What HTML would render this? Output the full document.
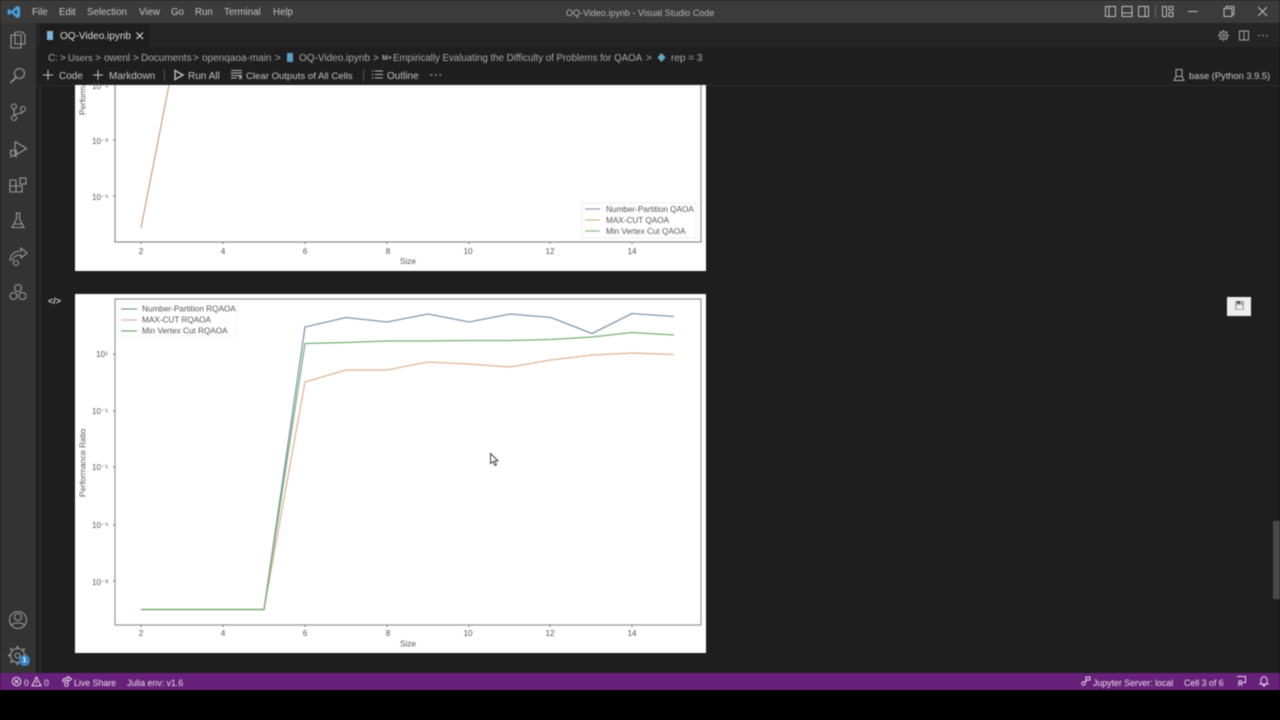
<!DOCTYPE html>
<html><head><meta charset="utf-8"><title>OQ-Video.ipynb - Visual Studio Code</title>
<style>
html,body{margin:0;padding:0;background:#000;width:1280px;height:720px;overflow:hidden}
#w{position:relative;width:1280px;height:720px;overflow:hidden;filter:blur(.5px);font-family:"Liberation Sans",sans-serif;color:#c4c4c4;font-size:10px}
.r{position:absolute}
.t{position:absolute;white-space:nowrap;line-height:14px}
svg{position:absolute;overflow:visible}
.i{fill:none;stroke:#9a9a9a;stroke-width:1.1}
.c{stroke:#bdbdbd;fill:none;stroke-width:1}
.g{color:#a9a9a9}
.m{font-size:9.7px;top:6px}
.b{top:52px}
.k{top:70px}
.sb{color:#e6dcea;font-size:8.800px;top:675.500px}
</style></head><body><div id="w">
<div class="r" style="left:0;top:0;width:1280px;height:23px;background:#3b3b3b"></div>
<div class="r" style="left:0;top:23px;width:36px;height:650px;background:#333"></div>
<div class="r" style="left:36px;top:23px;width:1244px;height:650px;background:#1e1e1e"></div>
<div class="r" style="left:36px;top:23px;width:1244px;height:24px;background:#252525"></div>
<div class="r" style="left:40px;top:24px;width:110px;height:23px;background:#1e1e1e"></div>
<div class="r" style="left:36px;top:47px;width:1244px;height:38px;background:#1f1f1f"></div>
<div class="r" style="left:36px;top:85px;width:1244px;height:1px;background:#2b2b2b"></div>
<div class="r" style="left:39px;top:85px;width:2px;height:588px;background:#2a2a2a"></div>
<div class="r" style="left:1273px;top:521px;width:7px;height:78px;background:#4a4a4a"></div>

<!-- title bar -->
<svg style="left:7px;top:5px" width="14" height="14" viewBox="0 0 14 14"><path d="M10 0.8L13 2.2V11.8L10 13.2L4.4 8L1.8 10L.6 9.3V4.7L1.8 4L4.4 6ZM10 4.4L6.8 7L10 9.6Z" fill="#4a9fe0"/></svg>
<span class="t m" style="left:32px">File</span>
<span class="t m" style="left:59px">Edit</span>
<span class="t m" style="left:87px">Selection</span>
<span class="t m" style="left:139px">View</span>
<span class="t m" style="left:171px">Go</span>
<span class="t m" style="left:195px">Run</span>
<span class="t m" style="left:224px">Terminal</span>
<span class="t m" style="left:273px">Help</span>
<span class="t" style="left:566px;top:5.500px;font-size:9px;color:#b5b5b5">OQ-Video.ipynb - Visual Studio Code</span>
<svg style="left:1105px;top:6px" width="70" height="12" class="i"><g class="c" stroke="#aaa">
<rect x=".5" y=".5" width="10" height="10"/><path d="M4 .5V10.500"/>
<rect x="17" y=".5" width="10" height="10"/><path d="M17 7H27"/>
<rect x="33.500" y=".5" width="10" height="10"/><path d="M40 .5V10.500"/>
<path d="M50.500 -1V12" stroke="#666"/>
<rect x="57.500" y=".5" width="4" height="10"/><rect x="64" y=".5" width="4" height="3.500"/><rect x="64" y="6.500" width="4" height="4"/></g></svg>
<svg style="left:1188px;top:6px" width="85" height="12"><g class="c" stroke="#ccc">
<path d="M0 5.500H10"/><rect x="36" y="2.500" width="8" height="8"/><path d="M38 2.500V.5H46V8.500H44"/><path d="M70 1L79 10M79 1L70 10"/></g></svg>

<!-- activity bar -->
<svg style="left:0;top:23px" width="36" height="650" class="i">
<path d="M15 9H22L25 12V21H21M15 9V12H11V25H21V12H15M21 21H15V12"/>
<circle cx="19.500" cy="50.500" r="5"/><path d="M16 54.500L10.500 60" stroke-width="1.500"/>
<circle cx="14" cy="83.500" r="2.500"/><circle cx="14" cy="95" r="2.500"/><circle cx="23" cy="86" r="2.500"/><path d="M14 86V92.500M23 88.500C23 91 15 90 14 92.500"/>
<g transform="translate(0,-1.500)"><path d="M15 120L26.500 127L15 134L15 120"/><circle cx="13.500" cy="131.500" r="3"/><path d="M10 128.500L12 130M17 128.500L15 130M9.500 132H11M16 132H18M10 136L12 134M17 136L15 134"/></g>
<path d="M10 157H16V163H22V169H10ZM16 163V169M10 163H16"/><rect x="20" y="155" width="6" height="6"/>
<g transform="translate(0,-1)"><path d="M15.500 191H20.500M16.500 191V197L12 205.500H24L19.500 197V191M14 202H22"/></g>
<path d="M10 238C10 231 15 228 21 228V225L27 230L21 235V232C16 232 13 234 12 238"/><circle cx="16" cy="240" r="2.500"/>
<circle cx="18" cy="265" r="3.500"/><circle cx="13.500" cy="273" r="3.500"/><circle cx="22.500" cy="273" r="3.500"/>
<circle cx="18" cy="597" r="8.500"/><circle cx="18" cy="594" r="3.500"/><path d="M11.500 602.500C13 599 23 599 24.500 602.500"/>
<circle cx="17.500" cy="632.500" r="7"/><circle cx="17.500" cy="632.500" r="2.500"/><path d="M17.500 625V623M17.500 640V642M10 632.500H8M25 632.500H27M12 627L10.500 625.500M23 627L24.500 625.500M12 638L10.500 639.500" stroke-width="1.800"/>
</svg>
<div class="r" style="left:19px;top:655px;width:11px;height:11px;border-radius:50%;background:#3a84c4;color:#fff;font-size:7px;line-height:11px;text-align:center;font-weight:bold">1</div>

<!-- tab -->
<svg style="left:46px;top:31px" width="8" height="10"><path d="M1 0H7V9H1Z" fill="#7cb6d8"/></svg>
<span class="t" style="left:60px;top:30px;color:#dcdcdc">OQ-Video.ipynb</span>
<svg style="left:136px;top:32px" width="8" height="8"><path d="M.5.5L7 7M7 .5L.5 7" stroke="#ddd" stroke-width="1.100"/></svg>

<!-- breadcrumbs -->
<span class="t g b" style="left:48px">C:</span>
<span class="t g b" style="left:60px">&gt;</span>
<span class="t g b" style="left:68px;font-size:9.500px">Users</span>
<span class="t g b" style="left:95px">&gt;</span>
<span class="t g b" style="left:104px">owenl</span>
<span class="t g b" style="left:133px">&gt;</span>
<span class="t g b" style="left:141px">Documents</span>
<span class="t g b" style="left:193px">&gt;</span>
<span class="t g b" style="left:202px">openqaoa-main</span>
<span class="t g b" style="left:275px">&gt;</span>
<svg style="left:286px;top:53px" width="8" height="10"><path d="M1 0H7V9H1Z" fill="#5a9fc4"/></svg>
<span class="t g b" style="left:299px">OQ-Video.ipynb</span>
<span class="t g b" style="left:373px">&gt;</span>
<span class="t g b" style="left:382px;font-size:7px;font-weight:bold">M+</span>
<span class="t g b" style="left:393px;font-size:9.700px">Empirically Evaluating the Difficulty of Problems for QAOA</span>
<span class="t g b" style="left:646px">&gt;</span>
<svg style="left:657px;top:53px" width="9" height="9"><path d="M4.500 0L8.500 4.500L4.500 9L.5 4.500Z" fill="#6ba6c9"/></svg>
<span class="t g b" style="left:671px">rep = 3</span>
<svg style="left:1218px;top:30px" width="60" height="12" class="c"><g stroke="#a5a5a5"><circle cx="5.500" cy="5.500" r="3.800"/><circle cx="5.500" cy="5.500" r="1.500"/><path d="M5.500 0V1.700M5.500 9.300V11M0 5.500H1.700M9.300 5.500H11M1.600 1.600L2.800 2.800M8.200 8.200L9.400 9.400M1.600 9.400L2.800 8.200M8.200 2.800L9.400 1.600" stroke-width="1.200"/><rect x="21.500" y="1" width="9" height="9"/><path d="M26 1V10"/></g><path d="M40.500 5.500h1.200M44.500 5.500h1.200M48.500 5.500h1.200" stroke="#b5b5b5" stroke-width="1.200"/></svg>

<!-- toolbar -->
<svg style="left:43px;top:70px" width="10" height="10"><path d="M5 0V10M0 5H10" stroke="#c8c8c8"/></svg>
<span class="t k" style="left:59px">Code</span>
<svg style="left:93px;top:70px" width="10" height="10"><path d="M5 0V10M0 5H10" stroke="#c8c8c8"/></svg>
<span class="t k" style="left:109px">Markdown</span>
<div class="r" style="left:164px;top:69px;width:1px;height:12px;background:#555"></div>
<svg style="left:174px;top:70px" width="10" height="11"><path d="M1 .5V9.500L9 5ZM1 .5" fill="none" stroke="#c8c8c8" stroke-width="1.300"/></svg>
<span class="t k" style="left:188px">Run All</span>
<svg style="left:231px;top:70px" width="12" height="10"><path d="M0 .5H11M0 3H11M0 5.500H11M0 8H6M8 6L11 9M11 6L8 9" stroke="#b5b5b5" fill="none"/></svg>
<span class="t k" style="left:246px;font-size:9.600px">Clear Outputs of All Cells</span>
<div class="r" style="left:363px;top:69px;width:1px;height:12px;background:#555"></div>
<svg style="left:372px;top:70px" width="11" height="10"><path d="M3 1H11M3 4.500H11M3 8H11M0 1H1.500M0 4.500H1.500M0 8H1.500" stroke="#b5b5b5"/></svg>
<span class="t k" style="left:387px">Outline</span>
<svg style="left:430px;top:74px" width="12" height="3"><path d="M.5 1h1.500M5 1h1.500M9.500 1h1.500" stroke="#bbb" stroke-width="1.200"/></svg>
<svg style="left:1173px;top:69px" width="12" height="13"><path d="M3 .5H9V7.500H3ZM3 7.500L1 11.500H11L9 7.500M1 11.500" fill="none" stroke="#a8a8a8"/></svg>
<span class="t" style="left:1189px;top:69px;font-size:9.300px">base (Python 3.9.5)</span>

<!-- cell markers -->
<span class="t" style="left:48px;top:294px;font-size:9px;font-weight:bold;color:#ccc">&lt;/&gt;</span>
<div class="r" style="left:1227px;top:297px;width:24px;height:19px;background:#eee"></div>
<svg style="left:1235px;top:301px" width="9" height="9"><rect width="9" height="9" fill="#aaa"/><rect x="1.500" y="4" width="6" height="4" fill="#eee"/><rect x="2" y="0" width="3" height="2.500" fill="#444"/></svg>

<!-- plot 1 -->
<div class="r" style="left:75px;top:85px;width:631px;height:186px;background:#fff"></div>
<svg style="left:0;top:0" width="1280" height="720" font-family="Liberation Sans, sans-serif" font-size="8.200" fill="#555">
<defs><clipPath id="p1"><rect x="75" y="85" width="631" height="186"/></clipPath></defs>
<path d="M115 85V242H701V85" fill="none" stroke="#8f8f8f" stroke-width="1.200"/>
<path d="M141 228L169 85" fill="none" stroke="#cda98a" stroke-width="1.300"/>
<path d="M113 140h2M113 196h2M141 242v2M223 242v2M305 242v2M387 242v2M469 242v2M550 242v2M632 242v2" stroke="#777"/>
<text x="92" y="144">10⁻³</text><text x="92" y="200">10⁻⁵</text><text x="92" y="89">10⁻¹</text>
<text x="141" y="254" text-anchor="middle">2</text><text x="223" y="254" text-anchor="middle">4</text><text x="305" y="254" text-anchor="middle">6</text><text x="388" y="254" text-anchor="middle">8</text><text x="468" y="254" text-anchor="middle">10</text><text x="550" y="254" text-anchor="middle">12</text><text x="632" y="254" text-anchor="middle">14</text>
<text x="408" y="264" text-anchor="middle">Size</text>
<g clip-path="url(#p1)"><text transform="translate(85.500,115) rotate(-90)">Performance Ratio</text></g>
<rect x="582" y="203" width="114" height="35" fill="#fff" stroke="#eeeeee"/>
<path d="M585 209H600" stroke="#8fa5b8" stroke-width="1.300"/><path d="M585 220H600" stroke="#d9b48f" stroke-width="1.300"/><path d="M585 231H600" stroke="#93bd93" stroke-width="1.300"/>
<text x="606" y="212">Number-Partition QAOA</text><text x="606" y="223">MAX-CUT QAOA</text><text x="606" y="234">Min Vertex Cut QAOA</text>

<!-- plot 2 -->
<rect x="75" y="294" width="631" height="359" fill="#fff"/>
<path d="M115 299V625H701V299Z" fill="none" stroke="#999" stroke-width="1.200"/>
<path d="M141 609.500H264L305 327L346 317.500L387 322L428 314L469 322L510 314L551 317.500L592 333.500L632 313.500L674 316.500" fill="none" stroke="#7f98ad" stroke-width="1.300"/>
<path d="M141 609.500H264L305 382L346 370L387 370L428 362L469 364L510 367L551 360L592 355L632 353L674 354.500" fill="none" stroke="#dfb592" stroke-width="1.300"/>
<path d="M141 609.500H264L305 343.500L346 342.500L387 341L428 341L469 340.500L510 340.500L551 339.500L592 337L632 332.500L674 335" fill="none" stroke="#7cae7c" stroke-width="1.300"/>
<path d="M113 354h2M113 411h2M113 467h2M113 525h2M113 581h2M141 625v2M223 625v2M305 625v2M387 625v2M469 625v2M550 625v2M632 625v2" stroke="#777"/>
<text x="96" y="357">10¹</text><text x="92" y="414">10⁻¹</text><text x="92" y="470">10⁻¹</text><text x="92" y="528">10⁻⁵</text><text x="92" y="585">10⁻³</text>
<text x="141" y="636" text-anchor="middle">2</text><text x="223" y="636" text-anchor="middle">4</text><text x="305" y="636" text-anchor="middle">6</text><text x="388" y="636" text-anchor="middle">8</text><text x="468" y="636" text-anchor="middle">10</text><text x="550" y="636" text-anchor="middle">12</text><text x="632" y="636" text-anchor="middle">14</text>
<text x="408" y="646.500" text-anchor="middle">Size</text>
<text transform="translate(85.500,497) rotate(-90)">Performance Ratio</text>
<rect x="119" y="303" width="118" height="33" fill="#fff" stroke="#f3f3f3"/>
<path d="M121 309H137" stroke="#7f98ad" stroke-width="1.300"/><path d="M121 320H137" stroke="#dfb592" stroke-width="1.300"/><path d="M121 331H137" stroke="#7cae7c" stroke-width="1.300"/>
<text x="142" y="311.500">Number-Partition RQAOA</text><text x="142" y="322.500">MAX-CUT RQAOA</text><text x="142" y="333.500">Min Vertex Cut RQAOA</text>
</svg>

<!-- cursor -->
<svg style="left:490px;top:453px" width="9" height="14"><path d="M.5.5V10.500L3 8.500L4.800 12.500L6.500 11.700L4.800 7.800H8Z" fill="#fff" stroke="#333" stroke-width=".9"/></svg>

<!-- status bar -->
<div class="r" style="left:0;top:673px;width:1280px;height:17px;background:#68217a"></div>
<svg style="left:11px;top:676px" width="60" height="12" fill="none" stroke="#e6dcea"><circle cx="5.500" cy="5.500" r="4.300"/><path d="M3.500 3.500L7.500 7.500M7.500 3.500L3.500 7.500"/><path d="M21 9.800H30L25.500 1Z"/><path d="M25.500 4.500V7.500"/></svg>
<span class="t sb" style="left:24px">0</span>
<span class="t sb" style="left:44px">0</span>
<svg style="left:62px;top:676px" width="10" height="11" fill="none" stroke="#e6dcea"><path d="M.5 6C.5 3 3 2 6 2V.5L9.500 3L6 5.500V4C4 4 2.500 4.500 2 6.500"/><circle cx="4.500" cy="8.500" r="1.800"/></svg>
<span class="t sb" style="left:74px">Live Share</span>
<span class="t sb" style="left:127px">Julia env: v1.6</span>
<svg style="left:1081px;top:676px" width="10" height="10" fill="none" stroke="#e6dcea"><circle cx="2.500" cy="7.500" r="1.800"/><rect x="5" y="1" width="4" height="3"/><path d="M4 6L6 4"/></svg>
<span class="t sb" style="left:1093px">Jupyter Server: local</span>
<span class="t sb" style="left:1184px">Cell 3 of 6</span>
<svg style="left:1236px;top:676px" width="10" height="11" fill="none" stroke="#e6dcea"><path d="M1 .5H9.500V6.500H6.500M2.500 10C2.500 7 6 7 6 10M4.200 4.500a1.500 1.500 0 1 0 .1 0"/></svg>
<svg style="left:1259px;top:676px" width="10" height="11" fill="none" stroke="#e6dcea"><path d="M1 8C2.500 7 2 5.500 2 4C2 2 3.500.8 5 .8S8 2 8 4C8 5.500 7.500 7 9 8ZM4 8.500C4 10.500 6 10.500 6 8.500"/></svg>
</div></body></html>
